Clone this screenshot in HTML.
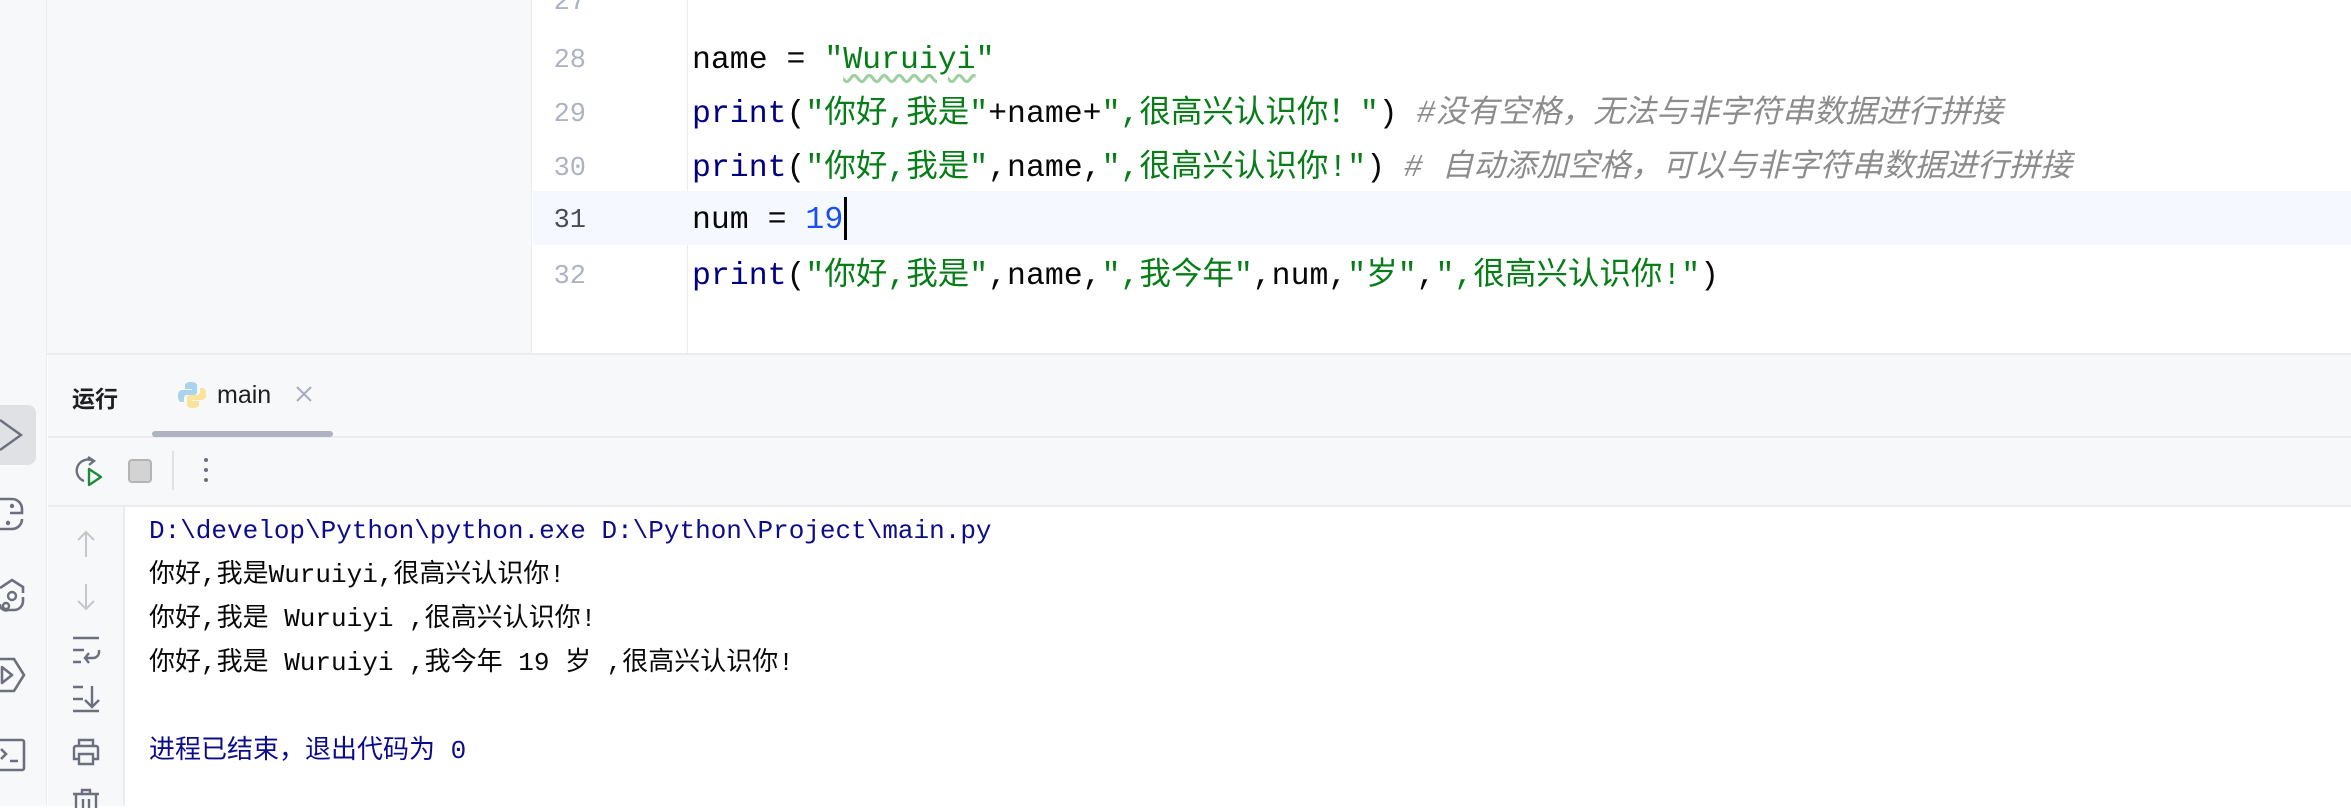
<!DOCTYPE html>
<html><head><meta charset="utf-8"><style>
*{margin:0;padding:0;box-sizing:border-box}
body{width:2351px;height:806px;overflow:hidden;background:#fff;position:relative;font-family:"Liberation Sans","Noto Sans CJK SC",sans-serif}
.a{position:absolute}
.code{position:absolute;left:692px;font-family:"Liberation Mono","Noto Sans CJK SC",monospace;font-size:31.5px;white-space:pre;color:#080808;line-height:54px;height:54px}
.ln{position:absolute;left:540px;width:46px;text-align:right;font-family:"Liberation Mono",monospace;font-size:27px;color:#aeb3c2;line-height:54px}
.kw{color:#000080}.s{color:#067d17}.n{color:#1750eb}.c{color:#8c8c8c;font-style:italic}
.con{position:absolute;left:149px;font-family:"Liberation Mono","Noto Sans CJK SC",monospace;font-size:26px;white-space:pre;color:#080808;line-height:44px}
.blue{color:#0c0c8a}
</style></head><body>
<div class="a" style="left:0;top:0;width:47px;height:806px;background:#f7f8fa;border-right:1px solid #ebecf0"></div>
<div class="a" style="left:47px;top:0;width:485px;height:353px;background:#f7f8fa;border-right:1px solid #ebecf0"></div>
<div class="a" style="left:687px;top:0;width:1px;height:353px;background:#ebecf0"></div>
<div class="a" style="left:533px;top:191px;width:1818px;height:54px;background:#f5f8fe"></div>
<div class="ln" style="top:-24px">27</div>
<div class="ln" style="top:34px">28</div>
<div class="ln" style="top:88px">29</div>
<div class="ln" style="top:142px">30</div>
<div class="ln" style="top:194px;color:#4a4d55">31</div>
<div class="ln" style="top:250px">32</div>
<div class="code" style="top:34px">name = <span class="s">"<span style="text-decoration:underline wavy #9fd0a0;text-underline-offset:6px">Wuruiyi</span>"</span></div>
<div class="code" style="top:88px"><span class="kw">print</span>(<span class="s">"你好,我是"</span>+name+<span class="s">",很高兴认识你！"</span>) <span class="c">#没有空格，无法与非字符串数据进行拼接</span></div>
<div class="code" style="top:142px"><span class="kw">print</span>(<span class="s">"你好,我是"</span>,name,<span class="s">",很高兴认识你!"</span>) <span class="c"># 自动添加空格，可以与非字符串数据进行拼接</span></div>
<div class="code" style="top:194px">num = <span class="n">19</span></div>
<div class="a" style="left:844px;top:197px;width:3px;height:43px;background:#000"></div>
<div class="code" style="top:250px"><span class="kw">print</span>(<span class="s">"你好,我是"</span>,name,<span class="s">",我今年"</span>,num,<span class="s">"岁"</span>,<span class="s">",很高兴认识你!"</span>)</div>
<div class="a" style="left:47px;top:353px;width:2304px;height:2px;background:#ebecf0"></div>
<div class="a" style="left:48px;top:355px;width:2303px;height:151px;background:#f7f8fa"></div>
<div class="a" style="left:48px;top:436px;width:2303px;height:2px;background:#ebecf0"></div>
<div class="a" style="left:48px;top:505px;width:2303px;height:2px;background:#ebecf0"></div>
<div class="a" style="left:48px;top:507px;width:77px;height:299px;background:#f7f8fa;border-right:2px solid #ebecf0"></div>
<div class="a" style="left:72px;top:380px;font-size:23px;font-weight:bold;color:#1e1f22">运行</div>
<svg class="a" style="left:178px;top:381px" width="28" height="28" viewBox="0 0 28 28"><path d="M13 1c-6 0-6 3-6 3v4h7v1H4S0 9 0 15s3 6 3 6h3v-4s0-3 3-3h7s3 0 3-3V4s0-3-6-3z" fill="#a9d3ef"/><path d="M15 27c6 0 6-3 6-3v-4h-7v-1h10s4 0 4-6-3-6-3-6h-3v4s0 3-3 3h-7s-3 0-3 3v7s0 3 6 3z" fill="#fbe39a"/></svg>
<div class="a" style="left:217px;top:381px;font-size:25px;color:#1e1f22">main</div>
<svg class="a" style="left:296px;top:386px" width="16" height="16"><path d="M1 1L15 15M15 1L1 15" stroke="#a8adbd" stroke-width="2"/></svg>
<div class="a" style="left:152px;top:431px;width:181px;height:6px;border-radius:3px;background:#aeb3c2"></div>
<svg class="a" style="left:74px;top:455px" width="32" height="34" viewBox="0 0 32 34"><path d="M19 6A11 11 0 1 0 10 26" fill="none" stroke="#6c707e" stroke-width="2.4"/><path d="M14 2l6 4-5 4" fill="none" stroke="#6c707e" stroke-width="2.4"/><path d="M15 14l12 8-12 8z" fill="none" stroke="#208a3c" stroke-width="2.4" stroke-linejoin="round"/></svg>
<div class="a" style="left:128px;top:459px;width:24px;height:24px;border-radius:4px;background:#d3d3d3;border:2px solid #b4b4b4"></div>
<div class="a" style="left:172px;top:451px;width:2px;height:39px;background:#dfe1e5"></div>
<div class="a" style="left:204px;top:458px;width:4px;height:4px;border-radius:2px;background:#6c707e;box-shadow:0 10px 0 #6c707e,0 20px 0 #6c707e"></div>
<div class="a" style="left:0;top:405px;width:36px;height:60px;border-radius:0 8px 8px 0;background:#dfe1e5"></div>
<svg class="a" style="left:0;top:416px" width="24" height="38"><path d="M0 4L21 19 0 34" fill="none" stroke="#6c707e" stroke-width="2.4"/></svg>
<svg class="a" style="left:0;top:497px" width="26" height="34"><path d="M0 2h12a10 10 0 0 1 10 10v4h-12M0 32h12a10 10 0 0 0 10-10" fill="none" stroke="#6c707e" stroke-width="2.6"/><circle cx="12" cy="9" r="2.2" fill="#6c707e"/><circle cx="8" cy="26" r="2.2" fill="#6c707e"/></svg>
<svg class="a" style="left:0;top:576px" width="26" height="40"><path d="M0 12L12 4 23 11v6M0 28a6 6 0 0 0 8 6h6a9 9 0 0 0 9-9v-4" fill="none" stroke="#6c707e" stroke-width="2.6"/><circle cx="12" cy="20" r="4" fill="none" stroke="#6c707e" stroke-width="2.4"/><circle cx="6" cy="30" r="3" fill="none" stroke="#6c707e" stroke-width="2.4"/></svg>
<svg class="a" style="left:0;top:657px" width="26" height="36"><path d="M0 2h14l10 16-10 16H0" fill="none" stroke="#6c707e" stroke-width="2.6"/><path d="M2 10l10 8-10 8z" fill="none" stroke="#6c707e" stroke-width="2.6" stroke-linejoin="round"/></svg>
<svg class="a" style="left:0;top:738px" width="26" height="34"><path d="M0 2h22a2 2 0 0 1 2 2v26a2 2 0 0 1-2 2H0" fill="none" stroke="#6c707e" stroke-width="2.6"/><path d="M1 11l5 5-5 5M10 23h8" fill="none" stroke="#6c707e" stroke-width="2.6"/></svg>
<svg class="a" style="left:76px;top:530px" width="20" height="28"><path d="M10 27V2M2 10l8-8 8 8" fill="none" stroke="#c4c6cc" stroke-width="2"/></svg>
<svg class="a" style="left:76px;top:583px" width="20" height="28"><path d="M10 1v25M2 18l8 8 8-8" fill="none" stroke="#c4c6cc" stroke-width="2"/></svg>
<svg class="a" style="left:72px;top:636px" width="30" height="28"><path d="M1 2h26M1 14h11M1 26h8M27 14v2a6 6 0 0 1-6 6h-8M17 17l-4 5 4 5" fill="none" stroke="#6c707e" stroke-width="2.4"/></svg>
<svg class="a" style="left:72px;top:685px" width="30" height="28"><path d="M1 2h10M1 14h10M1 26h26M20 1v21M13 15l7 7 7-7" fill="none" stroke="#6c707e" stroke-width="2.4"/></svg>
<svg class="a" style="left:72px;top:738px" width="30" height="28"><path d="M7 8V2h14v6M7 21H2V10a2 2 0 0 1 2-2h20a2 2 0 0 1 2 2v11h-5M7 16h14v10H7z" fill="none" stroke="#6c707e" stroke-width="2.4"/></svg>
<svg class="a" style="left:72px;top:788px" width="30" height="20"><path d="M1 6h26M10 6V2h8v4M4 6v14M24 6v14M11 11v9M17 11v9" fill="none" stroke="#6c707e" stroke-width="2.4"/></svg>
<div class="con blue" style="top:509px">D:\develop\Python\python.exe D:\Python\Project\main.py</div>
<div class="con" style="top:553px">你好,我是Wuruiyi,很高兴认识你!</div>
<div class="con" style="top:597px">你好,我是 Wuruiyi ,很高兴认识你!</div>
<div class="con" style="top:641px">你好,我是 Wuruiyi ,我今年 19 岁 ,很高兴认识你!</div>
<div class="con blue" style="top:729px">进程已结束，退出代码为 0</div>
</body></html>
